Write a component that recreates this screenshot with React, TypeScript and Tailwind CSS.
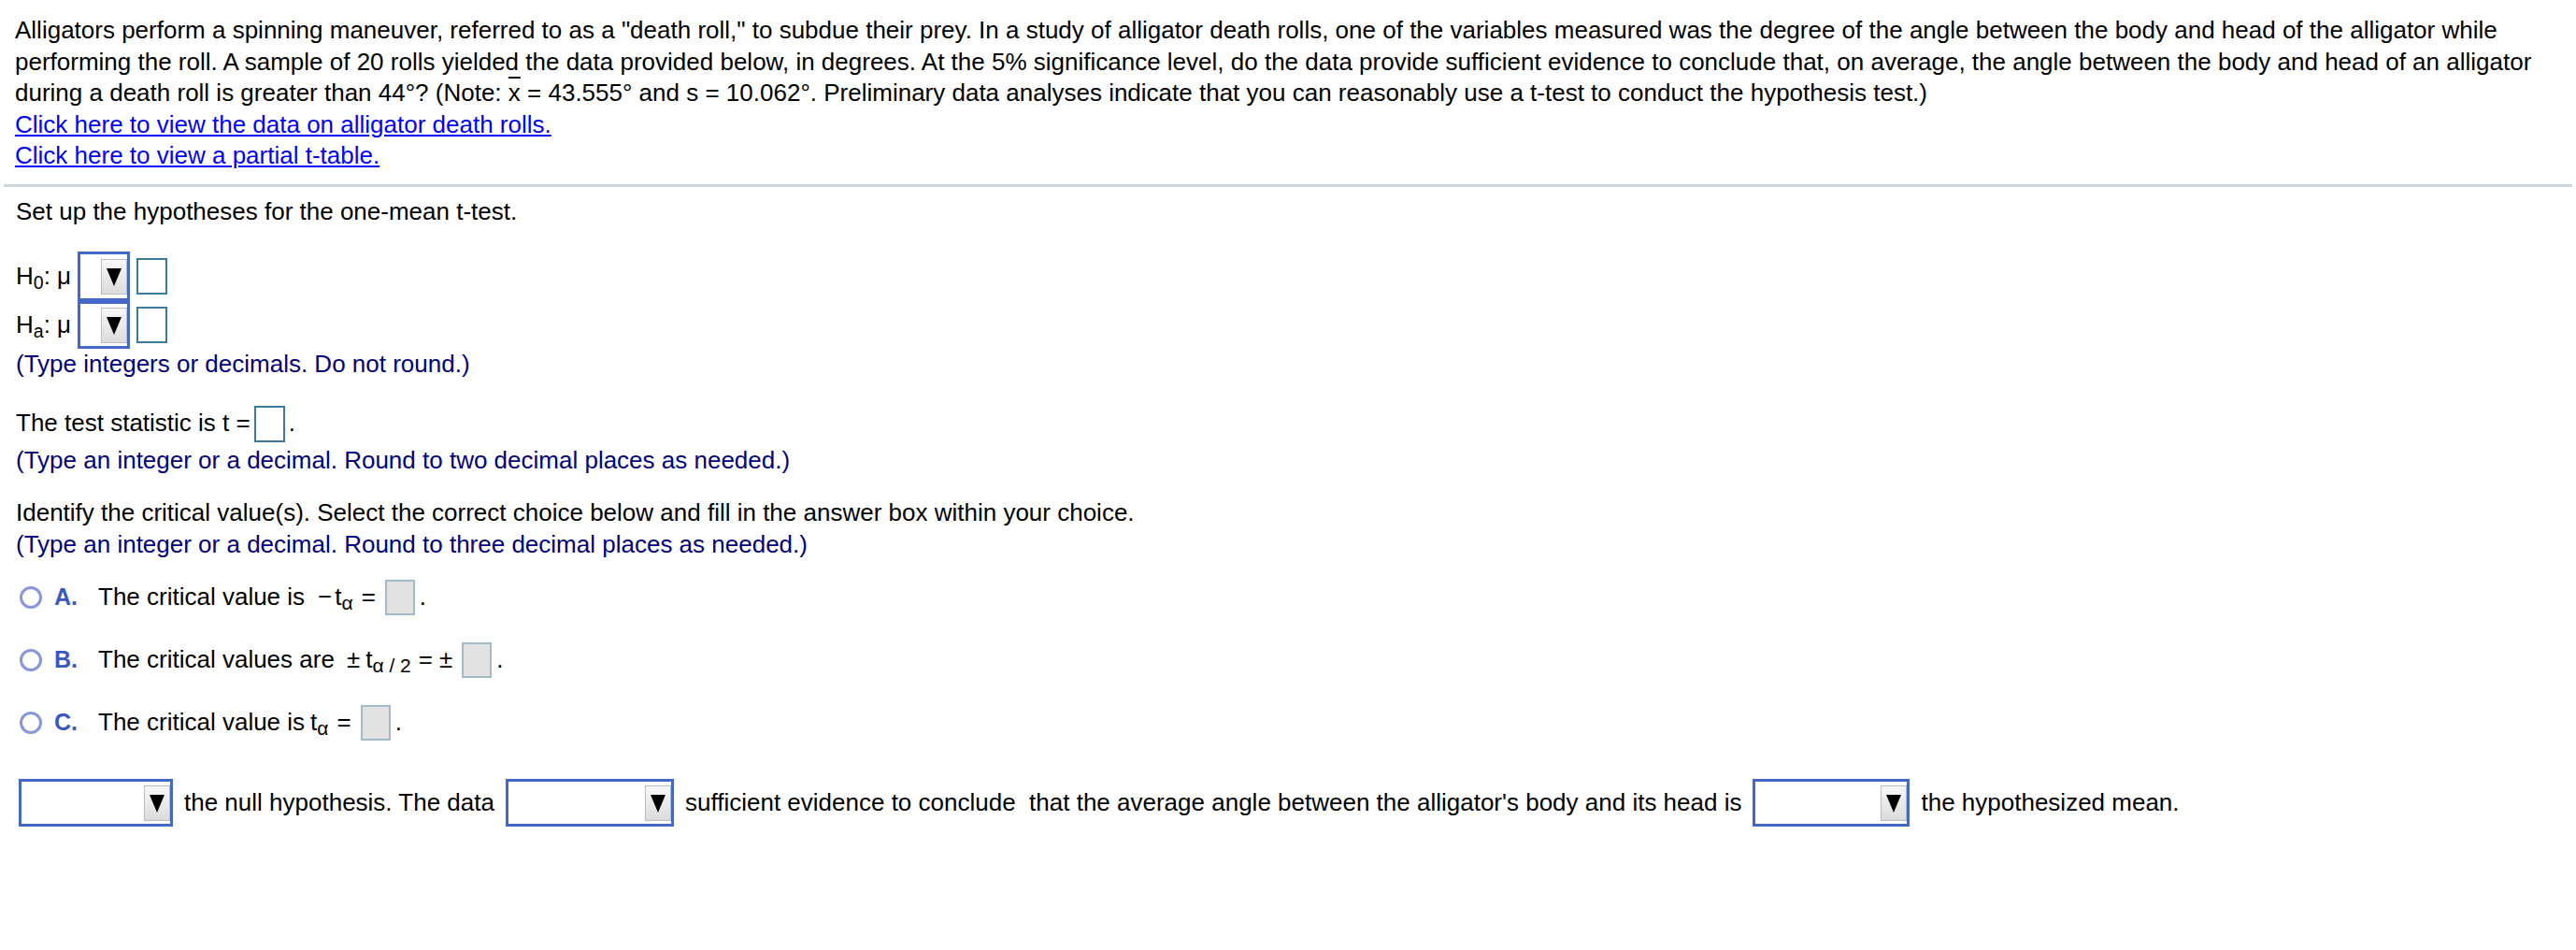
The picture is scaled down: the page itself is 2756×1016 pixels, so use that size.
import React from "react";

function Arrow() {
  return (
    <svg width="16" height="20" viewBox="0 0 16 20">
      <polygon points="0,1 16,1 8,20" fill="#000" />
    </svg>
  );
}

function Dropdown({ className }: { className: string }) {
  return (
    <div
      className={`flex items-center justify-end border-[3px] border-[#4468c8] bg-white ${className}`}
    >
      <div className="flex h-[38px] w-[28px] items-center justify-center border border-[#bcbcbc] bg-linear-to-b from-[#f8f8f8] to-[#dcdcdc]">
        <Arrow />
      </div>
    </div>
  );
}

function AnswerBox() {
  return <span className="inline-block h-[39px] w-[33px] border-2 border-[#3b7b99] bg-white" />;
}

function ChoiceBox() {
  return <span className="inline-block h-[38px] w-[32px] border-2 border-[#a0bccb] bg-[#e2e2e2]" />;
}

function Radio({ letter }: { letter: string }) {
  return (
    <>
      <span className="ml-[4px] inline-block size-[24px] shrink-0 rounded-full border-[3px] border-[#8797dc] bg-white" />
      <span className="ml-[13px] w-[47px] shrink-0 text-[25px] font-bold text-[#3b57c2]">{letter}</span>
    </>
  );
}

export default function App() {
  return (
    <main className="min-h-screen bg-white font-['Liberation_Sans',Arial,sans-serif] text-[26px] leading-[33.5px] text-black">
      <div className="px-[16px] pt-[16px]">
        <p>
          Alligators perform a spinning maneuver, referred to as a "death roll," to subdue their prey. In a study of
          alligator death rolls, one of the variables measured was the degree of the angle between the body and head of
          the alligator while performing the roll. A sample of 20 rolls yielded the data provided below, in degrees. At
          the 5% significance level, do the data provide sufficient evidence to conclude that, on average, the angle
          between the body and head of an alligator during a death roll is greater than 44°? (Note:{" "}
          <span className="overline">x</span> = 43.555° and s = 10.062°. Preliminary data analyses indicate that you can
          reasonably use a t-test to conduct the hypothesis test.)
        </p>
        <a href="#" className="block w-fit text-[#0000ff] underline">
          Click here to view the data on alligator death rolls.
        </a>
        <a href="#" className="block w-fit text-[#0000ff] underline">
          Click here to view a partial t-table.
        </a>
      </div>

      <div className="mx-[4px] mt-[13px] h-[3px] bg-[#d0d5df]" />

      <div className="px-[17px]">
        <p className="mt-[10px]">Set up the hypotheses for the one-mean t-test.</p>

        <div className="mt-[26px] flex flex-col">
          <div className="flex items-center">
            <span className="w-[66px]">
              H<sub>0</sub>: μ
            </span>
            <Dropdown className="h-[53px] w-[56px]" />
            <span className="ml-[7px] flex">
              <AnswerBox />
            </span>
          </div>
          <div className="flex items-center">
            <span className="w-[66px]">
              H<sub>a</sub>: μ
            </span>
            <Dropdown className="h-[51px] w-[56px]" />
            <span className="ml-[7px] flex">
              <AnswerBox />
            </span>
          </div>
        </div>
        <p className="text-[#000080]">(Type integers or decimals. Do not round.)</p>

        <div className="mt-[27px] flex h-[39px] items-center">
          <span>The test statistic is t =</span>
          <span className="ml-[4px] flex">
            <AnswerBox />
          </span>
          <span className="ml-[4px]">.</span>
        </div>
        <p className="mt-[3px] text-[#000080]">
          (Type an integer or a decimal. Round to two decimal places as needed.)
        </p>

        <p className="mt-[23px]">
          Identify the critical value(s). Select the correct choice below and fill in the answer box within your choice.
        </p>
        <p className="text-[#000080]">(Type an integer or a decimal. Round to three decimal places as needed.)</p>

        <div className="mt-[20px] flex flex-col gap-[28px]">
          <div className="flex h-[39px] items-center">
            <Radio letter="A." />
            <span>The critical value is</span>
            <span className="ml-[14px]">−</span>
            <span className="ml-[3px]">
              t<sub className="text-[21px]">α</sub>
            </span>
            <span className="ml-[9px]">=</span>
            <span className="ml-[10px] flex">
              <ChoiceBox />
            </span>
            <span className="ml-[5px]">.</span>
          </div>
          <div className="flex h-[39px] items-center">
            <Radio letter="B." />
            <span>The critical values are</span>
            <span className="ml-[13px]">±</span>
            <span className="ml-[6px]">
              t<sub className="text-[21px]">α / 2</sub>
            </span>
            <span className="ml-[8px]">=</span>
            <span className="ml-[7px]">±</span>
            <span className="ml-[10px] flex">
              <ChoiceBox />
            </span>
            <span className="ml-[5px]">.</span>
          </div>
          <div className="flex h-[39px] items-center">
            <Radio letter="C." />
            <span>The critical value is</span>
            <span className="ml-[6px]">
              t<sub className="text-[21px]">α</sub>
            </span>
            <span className="ml-[9px]">=</span>
            <span className="ml-[10px] flex">
              <ChoiceBox />
            </span>
            <span className="ml-[5px]">.</span>
          </div>
        </div>

        <div className="mt-[41px] flex items-center gap-[12px]">
          <Dropdown className="ml-[3px] h-[51px] w-[165px]" />
          <span>the null hypothesis. The data</span>
          <Dropdown className="h-[51px] w-[180px]" />
          <span>
            sufficient evidence to conclude{"\u00a0"} that the average angle between the alligator's body and its head is
          </span>
          <Dropdown className="h-[51px] w-[168px]" />
          <span>the hypothesized mean.</span>
        </div>
      </div>
    </main>
  );
}
